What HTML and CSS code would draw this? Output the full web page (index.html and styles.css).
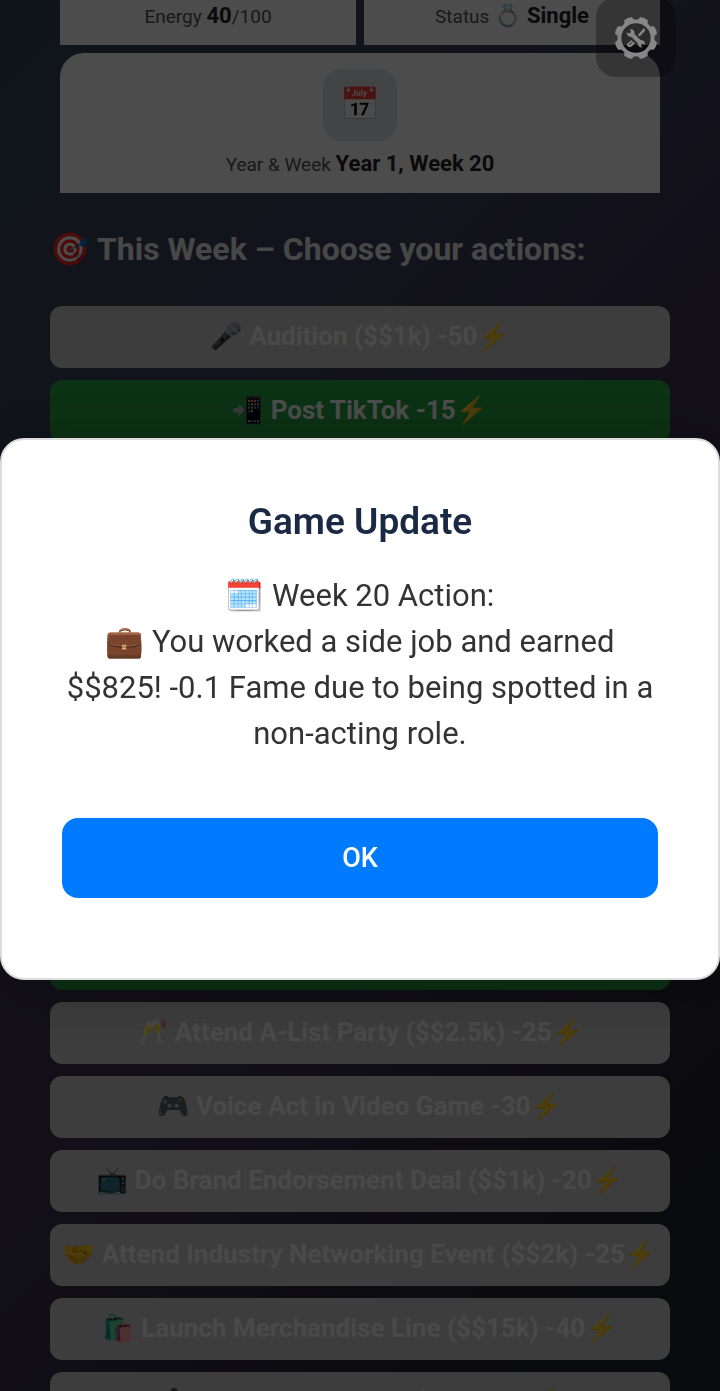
FILE: index.html
```html
<!DOCTYPE html>
<html lang="en">
<head>
    <meta charset="UTF-8">
    <meta name="viewport" content="width=device-width, initial-scale=1.0">
    <title>Game Update</title>
    <link rel="stylesheet" href="styles.css">
</head>
<body>
    <main class="game">
        <section class="stats">
            <div class="stat">Energy <span><strong>40</strong>/100</span></div>
            <div class="stat">Status <strong>💍 Single</strong></div>
            <div class="stat stat-wide">
                <div class="stat-icon">📅</div>
                <div>Year &amp; Week <strong>Year 1, Week 20</strong></div>
            </div>
        </section>

        <h2>🎯 This Week – Choose your actions:</h2>

        <div class="actions">
            <button class="action" disabled>🎤 Audition ($$1k) -50⚡</button>
            <button class="action">📲 Post TikTok -15⚡</button>
        </div>
        <div class="actions actions-more">
            <button class="action" aria-label="Side job"></button>
            <button class="action" disabled>🥂 Attend A-List Party ($$2.5k) -25⚡</button>
            <button class="action" disabled>🎮 Voice Act in Video Game -30⚡</button>
            <button class="action" disabled>📺 Do Brand Endorsement Deal ($$1k) -20⚡</button>
            <button class="action" disabled>🤝 Attend Industry Networking Event ($$2k) -25⚡</button>
            <button class="action" disabled>🛍️ Launch Merchandise Line ($$15k) -40⚡</button>
            <button class="action" disabled>🕴️ Launch Podcast ($$10k) -40⚡</button>
        </div>
    </main>

    <div class="overlay">
        <div class="modal" role="dialog" aria-labelledby="modalTitle">
            <h1 id="modalTitle">Game Update</h1>
            <p>🗓️ Week 20 Action:<br>💼 You worked a side job and earned $$825! -0.1 Fame due to being spotted in a non-acting role.</p>
            <button class="btn-ok">OK</button>
        </div>
    </div>

    <button class="btn-tools" aria-label="Settings">
        <svg viewBox="-23 -24 46 46" width="46" height="46">
            <defs>
                <path id="tooth" d="M-5.5 -17 L-4 -21 Q0 -22.4 4 -21 L5.5 -17 Z"/>
            </defs>
            <circle r="15" fill="#000" fill-opacity="0.2"/>
            <g fill="#868686">
                <path fill-rule="evenodd" d="M0 -18.5 A18.5 18.5 0 1 1 0 18.5 A18.5 18.5 0 1 1 0 -18.5 Z M0 -14.7 A14.7 14.7 0 1 0 0 14.7 A14.7 14.7 0 1 0 0 -14.7 Z"/>
                <use href="#tooth" transform="rotate(22.5)"/>
                <use href="#tooth" transform="rotate(67.5)"/>
                <use href="#tooth" transform="rotate(112.5)"/>
                <use href="#tooth" transform="rotate(157.5)"/>
                <use href="#tooth" transform="rotate(202.5)"/>
                <use href="#tooth" transform="rotate(247.5)"/>
                <use href="#tooth" transform="rotate(292.5)"/>
                <use href="#tooth" transform="rotate(337.5)"/>
                <!-- screwdriver -->
                <path d="M9 -9.5 L7 -9 L2 -3 L3.5 -1.5 L9 -7 Z"/>
                <path d="M-4.5 2 L-1 5.5 L-5 9 Q-8 9.5 -9 7.5 Q-9.5 6 -8.5 5.5 Z"/>
                <path d="M-7 7 L-3.5 4" stroke="#2b2b2b" stroke-width="1"/>
                <!-- wrench -->
                <path d="M-9.5 -5.5 L-6.5 -4.5 L-5 -6 L-6 -9 Q-2.5 -9 -1.5 -6 L-1.5 -4 L4.5 2 Q8 2 9 5 L9 7 L6.5 5.5 L5 7 L6.5 9.5 Q3 9.5 2 7 L1.5 5 L-4.5 -1 Q-8.5 -1 -9.5 -5.5 Z"/>
            </g>
        </svg>
    </button>
</body>
</html>
```

FILE: styles.css
```css
* {
    margin: 0;
    padding: 0;
    box-sizing: border-box;
    font-family: Roboto, "Noto Color Emoji", sans-serif;
}

body {
    height: 100vh;
    overflow: hidden;
    background: linear-gradient(135deg, #34455a, #40425f 30%, #3f3656 45%, #3a3150 65%, #26252f 85%, #202530);
}

.game {
    padding: 0 50px;
}

.stats {
    display: grid;
    grid-template-columns: 1fr 1fr;
    gap: 8px;
    padding: 0 10px;
}

.stat {
    background-color: #fff;
    color: #555;
    font-size: 19px;
    line-height: 30px;
    text-align: center;
    padding: 1px 0 13px;
}

.stat strong {
    color: #222;
    font-size: 22px;
}

.stat-wide {
    grid-column: 1 / 3;
    border-radius: 24px 24px 0 0;
    padding-top: 16px;
}

.stat-icon {
    width: 74px;
    height: 72px;
    margin: 0 auto 8px;
    border-radius: 18px;
    background-color: #e0e5eb;
    font-size: 32px;
    line-height: 70px;
}

h2 {
    color: #eee;
    font-size: 32px;
    line-height: 41px;
    margin: 36px 0;
}

.actions {
    display: flex;
    flex-direction: column;
    gap: 12px;
}

.actions-more {
    margin-top: 486px;
}

.action {
    height: 62px;
    flex-shrink: 0;
    padding-bottom: 2px;
    border: none;
    border-radius: 12px;
    background-color: #28a745;
    color: white;
    font-size: 26px;
    font-weight: bold;
    white-space: nowrap;
}

.action:disabled {
    background-color: #ccc;
    color: #f5f5f5;
}

.overlay {
    position: fixed;
    inset: 0;
    display: flex;
    align-items: center;
    padding-top: 27px;
    background-color: rgba(0, 0, 0, 0.7);
}

.modal {
    width: 100%;
    padding: 60px 60px 80px;
    border: 2px solid #ddd;
    border-radius: 24px;
    background-color: #fff;
    text-align: center;
    box-shadow: 0 8px 64px rgba(0, 0, 0, 0.3);
}

.modal h1 {
    color: #1a2a44;
    font-size: 37px;
    font-weight: 600;
    line-height: 44px;
    margin-bottom: 29px;
}

.modal p {
    color: #333;
    font-size: 31px;
    line-height: 46px;
    margin-bottom: 61px;
}

.btn-ok {
    width: 100%;
    height: 80px;
    border: none;
    border-radius: 16px;
    background-color: #007bff;
    color: white;
    font-size: 27px;
    font-weight: 500;
}

.btn-tools {
    position: fixed;
    top: -3px;
    right: 44px;
    width: 80px;
    height: 80px;
    border: none;
    border-radius: 20px;
    background-color: rgba(0, 0, 0, 0.3);
}

.btn-tools svg {
    display: block;
    margin: 0 auto;
}
```
